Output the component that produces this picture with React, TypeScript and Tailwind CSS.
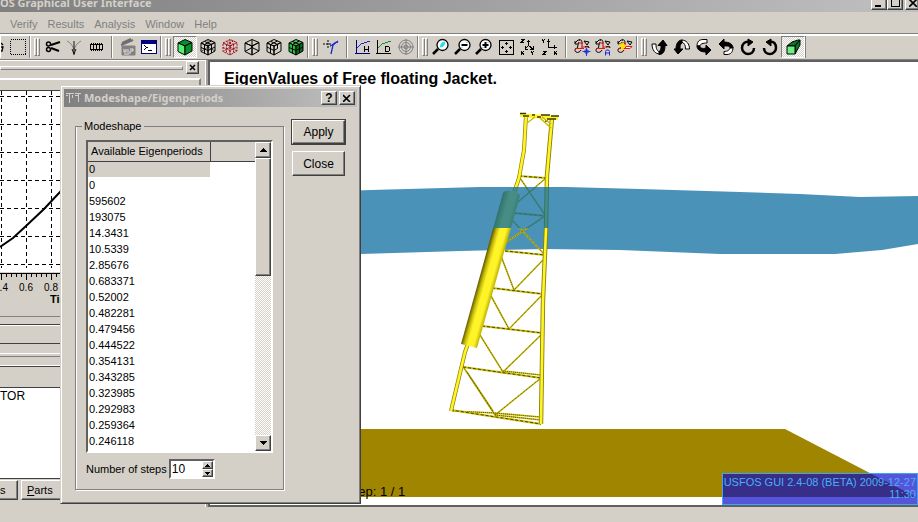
import React from "react";

type Kids = { children?: React.ReactNode };

const eigenperiods = [
  "0", "0", "595602", "193075", "14.3431", "10.5339", "2.85676", "0.683371", "0.52002",
  "0.482281", "0.479456", "0.444522", "0.354131", "0.343285", "0.323985", "0.292983",
  "0.259364", "0.246118",
];

const raised =
  "bg-[#d4d0c8] border border-t-white border-l-white border-r-[#404040] border-b-[#404040] shadow-[inset_-1px_-1px_0_#808080]";
const dither = "bg-[repeating-conic-gradient(#ffffff_0_25%,#d4d0c8_0_50%)] bg-[length:2px_2px]";

function Icon({ children, crisp = false }: Kids & { crisp?: boolean }) {
  return (
    <svg
      className="h-[18px] w-[18px] shrink-0"
      viewBox="0 0 18 18"
      fill="none"
      stroke="#000"
      shapeRendering={crisp ? "crispEdges" : "auto"}
      aria-hidden="true"
    >
      {children}
    </svg>
  );
}

function Tool({ label, on = false, children }: Kids & { label: string; on?: boolean }) {
  return (
    <button
      type="button"
      aria-label={label}
      className={`flex h-[22px] min-w-0 flex-1 items-center justify-center ${
        on ? `border border-t-[#808080] border-l-[#808080] border-r-white border-b-white ${dither}` : ""
      }`}
    >
      {children}
    </button>
  );
}

function Grip() {
  return (
    <div className="mr-[2px] ml-[3px] flex h-[18px] w-[6px] shrink-0">
      <div className="w-[3px] border border-t-white border-l-white border-r-[#808080] border-b-[#808080]" />
      <div className="w-[3px] border border-t-white border-l-white border-r-[#808080] border-b-[#808080]" />
    </div>
  );
}

function Bar({ width, children }: Kids & { width: string }) {
  return (
    <div className={`flex h-[22px] shrink-0 items-center border-r border-l border-r-[#808080] border-l-white ${width}`}>
      {children}
    </div>
  );
}

const Split = () => <div className="mx-1 h-[22px] w-[2px] shrink-0 border-l border-[#808080] bg-white" />;

function Cube({ mode }: { mode: "solid" | "mesh" | "dots" | "wire" | "hidden" | "greenmesh" }) {
  const solid = mode === "solid";
  const green = mode === "greenmesh";
  const stroke = mode === "dots" ? "#a01020" : "#000";
  return (
    <Icon>
      <g stroke={stroke} strokeWidth="1" strokeDasharray={mode === "dots" ? "2 1" : undefined} strokeLinejoin="round">
        <path d="M2 5 9 1.500 16 4.500 9 8Z" fill={solid ? "#089030" : green ? "#50c060" : "none"} />
        <path d="M2 5 9 8V17L2 13.500Z" fill={solid ? "#58f070" : green ? "#28c040" : "none"} />
        <path d="M9 8 16 4.500V13L9 17Z" fill={solid ? "#06902a" : green ? "#086820" : "none"} />
        {(mode === "mesh" || mode === "dots" || green) && (
          <path d="M5.500 6.500V15.500M2 9.500 9 12.500 16 9M12.500 6.500V15M5.500 3.500 12.500 6.500M5.500 6.500 12.500 3" />
        )}
        {mode === "mesh" && <path d="M9 1.500V9L2 13.500M9 9 16 13" strokeWidth="0.600" />}
        {mode === "dots" && <path d="M9 1.500V9L2 13.500M9 9 16 13" />}
        {mode === "wire" && <path d="M9 1.500V9.500L2 13.500M9 9.500 16 13" />}
        {mode === "hidden" && <path d="M5.500 6.500V15M2 9 9 12.500 12.500 10.500V6.500L6 3.500M5.500 6.500 12.500 3" />}
      </g>
    </Icon>
  );
}

function Lens({ sign }: { sign: "none" | "minus" | "plus" }) {
  return (
    <Icon>
      <path d="M1 16 6 11" strokeWidth="2.500" />
      <circle cx="10.500" cy="7" r="5.500" fill="#fff" strokeWidth="1.300" />
      {sign === "none" && <path d="M8.500 9c0-3 2-5 4-5 0 3-1 5-4 5Z" fill="#20e0e8" stroke="#20e0e8" />}
      {sign !== "none" && <path d={sign === "minus" ? "M7.500 7h6" : "M7.500 7h6M10.500 4v6"} strokeWidth="2" />}
      {sign !== "none" && <path d="M7.500 9.500h1M12.500 4.500h1" stroke="#20e0e8" />}
    </Icon>
  );
}

function Orbit({ kind }: { kind: "move" | "auto" | "light" }) {
  return (
    <Icon>
      <path d="M2 3v3h3M2 5l3-3h2M11 3l5 1-2 3Z" />
      <path d="M6 2c3-1 3 2 3 4M6 4c-1 3-2 5-1 7M5 10c-3 0-4 3-2 4s4 0 5-2" />
      <path d="M5 5h4v4h7M2 10.500h9M9 5v6" stroke="#e01818" strokeWidth="1.200" />
      {kind === "move" && <path d="M13.500 10v8M9.500 13.500h8M12 12h3v3h-3Z" stroke="#1828e0" strokeWidth="0.900" />}
      {kind === "auto" && <path d="M11.500 17.500v-4l1-1.500h2l1 1.500v4M11.500 15h4" stroke="#1828e0" />}
      {kind !== "light" && <path d="M12 9c2-1 4-1 4 1" />}
      {kind === "light" && (
        <>
          <path d="M7 5 8 7 11 8 8 9.500 6 12 5 9 3 7Z" fill="#ffe000" stroke="#ffe000" />
          <path d="M10 8.500h6l-2 2h-5Z" fill="#fff" stroke="#e01818" />
        </>
      )}
    </Icon>
  );
}

function Toolbar() {
  return (
    <div className="flex h-[24px] shrink-0 items-start overflow-hidden border-t border-white">
      <Bar width="w-[30px]">
        <div className="w-[6px] shrink-0 overflow-hidden">
          <svg className="h-[18px] w-[6px]" viewBox="0 0 6 18" fill="none" stroke="#000" aria-hidden="true">
            <path d="M0 5 2 7M0 9h2l-1 4H0" strokeWidth="1.300" />
          </svg>
        </div>
        <Tool label="Select area">
          <Icon crisp>
            <path d="M1.500 1.500h15v15h-15Z" strokeDasharray="1 1" />
          </Icon>
        </Tool>
      </Bar>
      <Bar width="w-[131px]">
        <Grip />
        <Tool label="Cut">
          <Icon>
            <path d="M7 7 16 4M7 10 15 13" strokeWidth="2" />
            <circle cx="4.500" cy="6" r="2" strokeWidth="1.500" />
            <circle cx="4.500" cy="11.500" r="2" strokeWidth="1.500" />
          </Icon>
        </Tool>
        <Tool label="Split member">
          <Icon>
            <path d="M2 3c4 2 6 5 7 9 1-4 3-7 7-9" stroke="#808080" />
            <path d="M9 3v14M7 11l2 5 2-5" strokeWidth="0.900" />
          </Icon>
        </Tool>
        <Tool label="Film strip">
          <Icon crisp>
            <path d="M3 6.500h13M3 11.500h13M3.500 6v6M6.500 6v6M9.500 6v6M12.500 6v6M15.500 6v6" />
            <path d="M4 5.500h11M4 12.500h11" strokeDasharray="1 1" />
          </Icon>
        </Tool>
        <Split />
        <Tool label="Record animation">
          <Icon>
            <path d="M3 8h13v9H3Z" fill="#808080" stroke="#808080" />
            <path d="M2 7 14 2M3 5 12 1" stroke="#707070" strokeWidth="2" />
            <path d="M5 11v3h2v-3M9 11v4M11 11h3v2h-3v3M5 16h5" stroke="#e8e8e8" />
          </Icon>
        </Tool>
        <Tool label="Console">
          <Icon crisp>
            <path d="M1.500 2.500h15v13h-15Z" fill="#fff" stroke="#000080" />
            <path d="M1 4h16" stroke="#000080" strokeWidth="3" />
            <path d="M4 7.500l3 2-3 2M8 12.500h4" />
          </Icon>
        </Tool>
      </Bar>
      <Bar width="w-[147px]">
        <Grip />
        <Tool label="Solid view" on><Cube mode="solid" /></Tool>
        <Tool label="Mesh view"><Cube mode="mesh" /></Tool>
        <Tool label="Dotted view"><Cube mode="dots" /></Tool>
        <Tool label="Wireframe view"><Cube mode="wire" /></Tool>
        <Tool label="Hidden line view"><Cube mode="hidden" /></Tool>
        <Tool label="Shaded mesh view"><Cube mode="greenmesh" /></Tool>
      </Bar>
      <Bar width="w-[110px]">
        <Grip />
        <Tool label="Local axes">
          <Icon>
            <path d="M1 6h8M6 2v8" strokeDasharray="2 1" />
            <path d="M9 16 11 7 16 3M8 8c3 0 3-4 8-4" stroke="#1828d0" strokeWidth="1.300" />
          </Icon>
        </Tool>
        <Split />
        <Tool label="History plot">
          <Icon crisp>
            <path d="M2.500 2v14M1 15.500h15" stroke="#000080" />
            <path d="M3 10 7 6 16 3" stroke="#1828d0" />
            <path d="M10.500 8v6M14.500 8v6M10 11.500h5" />
          </Icon>
        </Tool>
        <Tool label="Dynamic plot">
          <Icon crisp>
            <path d="M2.500 2v14M1 15.500h15" />
            <path d="M3 10 7 6 16 3" stroke="#109020" />
            <path d="M10.500 8.500v5h3l1-1V9.500l-1-1Z" />
          </Icon>
        </Tool>
        <Tool label="Target">
          <Icon>
            <g stroke="#808080">
              <circle cx="9" cy="9" r="7" />
              <circle cx="9" cy="9" r="4.500" />
              <circle cx="9" cy="9" r="2" />
              <path d="M1 9h16M9 1v16" />
            </g>
          </Icon>
        </Tool>
      </Bar>
      <Bar width="w-[219px]">
        <Grip />
        <Tool label="Zoom window"><Lens sign="none" /></Tool>
        <Tool label="Zoom out"><Lens sign="minus" /></Tool>
        <Tool label="Zoom in"><Lens sign="plus" /></Tool>
        <Tool label="Fit to window">
          <Icon crisp>
            <path d="M2.500 2.500h14v14h-14ZM9.500 4v3M9.500 12v3M4 9.500h3M12 9.500h3M8 5.500h3M8 13.500h3M5.500 8v3M13.500 8v3" />
          </Icon>
        </Tool>
        <Tool label="Isometric view">
          <Icon crisp>
            <path d="M2 1.500h3L2 4.500h3M9.500 2v6M8 3.500h3M9 8 6 11M10 8l4 3M14 8v3h-3M6 8v3h3M2 13l3 4M5 13l-3 4M12 13l1 2 2-2M13.500 15v2" />
          </Icon>
        </Tool>
        <Tool label="Plan view">
          <Icon crisp>
            <path d="M1 1l1 2 2-2M2.500 3v2M7.500 1v8h8M6 3.500h3M13.500 7v4M2 13.500h3l-3 3h3M13 13l3 4M16 13l-3 4" />
          </Icon>
        </Tool>
        <Split />
        <Tool label="Rotate model"><Orbit kind="move" /></Tool>
        <Tool label="Auto rotate"><Orbit kind="auto" /></Tool>
        <Tool label="Rotate light"><Orbit kind="light" /></Tool>
      </Bar>
      <Bar width="w-[169px]">
        <Grip />
        <Tool label="Turn up">
          <Icon>
            <path d="M1 6h4c0 5 1 7 4 8v2C4 16 1 12 1 6Z" fill="#fff" />
            <path d="M8 16.500v-3c2-1 2-3 2-6H7l5-5.500 4 5.500h-2c0 6-2 9-6 9Z" fill="#000" />
          </Icon>
        </Tool>
        <Tool label="Turn down">
          <Icon>
            <path d="M16.500 11h-4c0-4-1-6-4-7V2c5 0 8 4 8 9Z" fill="#fff" />
            <path d="M9 2v3c-2 1-2 3-2 6h3l-5 5-4-5h2c0-5 2-9 6-9Z" fill="#000" />
          </Icon>
        </Tool>
        <Tool label="Turn right">
          <Icon>
            <path d="M12 1.500H8C4 1.500 2 4 2 8h3c0-2 3-3 7-3Z" fill="#fff" />
            <path d="M2 8c0 4 4 6 9 6v3l5-5-5-5v3C7 11 5 10 5 8Z" fill="#000" />
          </Icon>
        </Tool>
        <Tool label="Turn left">
          <Icon>
            <path d="M7 16.500h3c4 0 6-3 6-7h-3c0 2-2 4-6 4Z" fill="#fff" />
            <path d="M16 10c0-4-4-6-9-6V1L2 6l5 5V8c4 0 6 0 6 2Z" fill="#000" />
          </Icon>
        </Tool>
        <Tool label="Rotate clockwise">
          <Icon>
            <path d="M10 4C6 3 3 6 3 10c0 3 3 6 6 6s6-2 6-6" strokeWidth="2.500" />
            <path d="M9 1l5 3-5 4Z" fill="#000" />
          </Icon>
        </Tool>
        <Tool label="Rotate counterclockwise">
          <Icon>
            <path d="M9 4c4-1 6 2 6 6 0 3-3 6-6 6s-6-2-6-6" strokeWidth="2.500" />
            <path d="M10 1 5 4l5 4Z" fill="#000" />
          </Icon>
        </Tool>
        <Tool label="Perspective" on>
          <Icon>
            <path d="M3 8h8l5-6h-2L8 4Z" fill="#087828" />
            <path d="M11 8 16 2v5l-5 9Z" fill="#087828" />
            <path d="M3 8h8v8H3Z" fill="#70f080" />
          </Icon>
        </Tool>
      </Bar>
    </div>
  );
}

function Plot() {
  const rows = [5, 33, 61, 89, 117, 145, 173];
  const cols = [1, 26, 51, 76, 101, 126, 151, 176];
  const ticks = Array.from({ length: 40 }, (_, i) => 1 + i * 5);
  return (
    <svg className="h-[225px] w-full" aria-label="Response over time" role="img">
      <g shapeRendering="crispEdges" stroke="#000">
        <rect width="207" height="181" fill="#fff" stroke="none" />
        {rows.map((y) => (
          <path key={y} d={`M0 ${y + 0.5}H200`} strokeDasharray="4 3" />
        ))}
        {cols.map((x) => (
          <path key={x} d={`M${x + 0.5} 0V177`} strokeDasharray="4 3" />
        ))}
        <path d="M0 182.500H200" />
        {ticks.map((x, i) => (
          <path key={x} d={`M${x + 0.5} 183v${i % 5 === 0 ? 6 : 3}`} />
        ))}
      </g>
      <path d="M0 156 13 147 26 135 44 118 60 101 90 70" fill="none" stroke="#000" strokeWidth="2" />
      <g className="font-['Liberation_Sans'] text-[10px]" textAnchor="middle">
        <text x="1" y="200">0.4</text>
        <text x="26" y="200">0.6</text>
        <text x="51" y="200">0.8</text>
      </g>
      <text x="50" y="212" className="font-['Liberation_Sans'] text-[11px] font-bold">Time</text>
    </svg>
  );
}

function Dock() {
  return (
    <aside className="flex w-[205px] shrink-0 flex-col overflow-hidden border-t border-white">
      <div className="flex h-[13px] items-center pr-[6px]">
        <div className="h-[4px] flex-1 border border-t-white border-l-white border-r-[#808080] border-b-[#808080]" />
        <button
          type="button"
          aria-label="Close panel"
          className={`ml-[3px] flex h-[13px] w-[13px] items-center justify-center ${raised}`}
        >
          <svg className="h-[7px] w-[7px]" viewBox="0 0 7 7" stroke="#000" strokeWidth="1.500" aria-hidden="true">
            <path d="M1 1 6 6M6 1 1 6" />
          </svg>
        </button>
      </div>
      <div className="mt-[4px] mr-[4px] h-[13px] border-t-2 border-r-2 border-b border-t-white border-r-[#808080] border-b-[#404040]" />
      <Plot />
      <div className="h-[9px] border-t border-b border-t-[#808080] border-b-[#404040]" />
      <div className="h-[18px] border-t border-white" />
      <div className="h-[11px] border-t border-b border-t-[#404040] border-b-white" />
      <div className="mt-[2px] h-[10px] border-t border-b border-t-[#808080] border-b-white" />
      <div className="h-[21px] border-t border-[#404040]" />
      <div className="h-[92px] border-t border-b border-t-[#404040] border-b-[#404040] bg-white pt-px text-[12px] leading-[14px]">
        TOR
      </div>
      <div className="flex gap-[3px] pt-px text-[11px] leading-[14px]">
        <button type="button" className={`h-[20px] w-[18px] overflow-hidden border-l-0 text-left ${raised}`}>
          <span className="-ml-[6px]">ps</span>
        </button>
        <button type="button" className={`h-[20px] w-[52px] pl-[5px] text-left ${raised}`}>
          <u>P</u>arts
        </button>
      </div>
    </aside>
  );
}

type Tones = { dark: string; mid: string; light: string; line: string };

const dry: Tones = { dark: "#4c4600", mid: "#c8bc08", light: "#fff428", line: "#8c8000" };
const wet: Tones = { dark: "#2f716c", mid: "#3d8279", light: "#478d83", line: "#2f7468" };

function Jacket({ id, tones }: { id: string; tones: Tones }) {
  const leftLeg = "M526 115 524 150 519 178 510 205 480 310 465 352 451 411";
  const rightLeg = "M552 118 547 175 546 230 543 300 541 424";
  const braces =
    "M519 176 546 178M514 213 546 216M505 251 545 255M492 288 543 294M482 326 542 333M463 367 541 378M451 410 541 424";
  const diagonals =
    "M520 178 545 215M546 178 518 202M545 216 505 243M513 221 544 254M501 256 514 290 543 260M491 296 509 329 543 294M480 335 503 372 542 334M464 368 495 415 541 378M467 372 493 411M453 411 495 413 540 417M503 371 541 375M495 415 541 420";
  return (
    <g fill="none">
      <defs>
        <linearGradient id={id} gradientUnits="userSpaceOnUse" x1="481" y1="270" x2="497" y2="274.500">
          <stop offset="0" stopColor={tones.dark} />
          <stop offset="0.250" stopColor={tones.mid} />
          <stop offset="0.450" stopColor={tones.light} />
          <stop offset="0.800" stopColor={tones.light} />
          <stop offset="1" stopColor={tones.mid} />
        </linearGradient>
      </defs>
      <path d={diagonals} stroke={tones.mid} strokeWidth="1.600" />
      <path d={diagonals} stroke={tones.dark} strokeWidth="0.800" strokeDasharray="1 1" />
      <path d={braces} stroke={tones.mid} strokeWidth="2" />
      <path d={braces} stroke={tones.dark} strokeWidth="1" strokeDasharray="3 2" />
      <path d={leftLeg} stroke={tones.line} strokeWidth="4" />
      <path d={leftLeg} stroke={tones.light} strokeWidth="2.600" />
      <path d={rightLeg} stroke={tones.line} strokeWidth="4.400" />
      <path d={rightLeg} stroke={tones.light} strokeWidth="2.600" />
      <path d="M520 115 558 118" stroke={tones.light} strokeWidth="4" />
      <path d="M520 113.500h6M523 116h6M532 115h3M537 117h4M541 115h9M547 119h9M551 116h8M545 121h3" stroke="#3c3800" strokeWidth="1.500" />
      <path d="M527 123 535 117M540 118 551 128M542 117 551 124" stroke={tones.mid} strokeWidth="1.500" />
      <path d="M503 193C505 189 519 191 520 196L477 348 461 344Z" fill={`url(#${id})`} />
    </g>
  );
}

function Viewport() {
  return (
    <main className="relative min-w-0 flex-1 overflow-hidden border-t-2 border-b-2 border-l-2 border-[#606060] bg-white">
      <svg
        className="absolute inset-0 h-full w-full"
        viewBox="210 62 708 443"
        preserveAspectRatio="xMinYMin slice"
        role="img"
        aria-label="Jacket structure floating above the seabed"
      >
        <defs>
          <clipPath id="above"><path d="M210 62H918V187H210ZM210 228H918V505H210Z" /></clipPath>
          <clipPath id="below"><path d="M210 187H918V228H210Z" /></clipPath>
        </defs>
        <path d="M210 196 371 190 480 187 565 187 640 189 740 192 800 194 860 197 918 196V244L882 250 835 254 720 254 620 250 545 249 460 251 361 254 210 256Z" fill="#4a92b7" />
        <path d="M210 429H785L918 498H210Z" fill="#a08600" />
        <path d="M210 497H918V505H210Z" fill="#fff" />
        <g clipPath="url(#above)"><Jacket id="dryTube" tones={dry} /></g>
        <g clipPath="url(#below)"><Jacket id="wetTube" tones={wet} /></g>
      </svg>
      <h1 className="absolute top-[7px] left-[14px] text-[16px] leading-[20px] font-bold whitespace-nowrap">
        EigenValues of Free floating Jacket.
      </h1>
      <p className="absolute bottom-[5px] left-[136px] text-[13px] leading-[16px] whitespace-nowrap">Step: 1 / 1</p>
      <p className="absolute right-0 bottom-0 border border-[#3aa8f8] bg-[#0505c8]/68 px-px pt-[2px] pb-[4px] text-right text-[11px] leading-[12px] whitespace-nowrap text-[#48b0f8]">
        USFOS GUI 2.4-08 (BETA) 2009-12-27
        <br />
        11:30
      </p>
    </main>
  );
}

function Arrow({ up = false, small = false }: { up?: boolean; small?: boolean }) {
  return (
    <svg className={small ? "h-[3px] w-[5px]" : "h-[4px] w-[7px]"} viewBox="0 0 7 4" shapeRendering="crispEdges" aria-hidden="true">
      <path d={up ? "M0 4 3.500 0 7 4Z" : "M0 0 3.500 4 7 0Z"} />
    </svg>
  );
}

function ModeshapeDialog() {
  return (
    <section
      role="dialog"
      aria-label="Modeshape/Eigenperiods"
      className="absolute top-[85px] left-[60px] w-[301px] border border-t-[#d4d0c8] border-r-[#404040] border-b-[#404040] border-l-[#d4d0c8] bg-[#d4d0c8] p-[3px] text-[11px] leading-[14px] shadow-[inset_1px_1px_0_#fff,inset_-1px_-1px_0_#808080]"
    >
      <header className="flex h-[18px] items-center gap-[2px] bg-linear-to-r from-[#808080] to-[#c0c0c0] pr-[2px] pl-[2px]">
        <svg className="h-[12px] w-[16px]" viewBox="0 0 16 12" fill="none" stroke="#d4d0c8" shapeRendering="crispEdges" aria-hidden="true">
          <path d="M0 1.500h8M9 1.500h6M3.500 1v10M0 3.500h2M9 3.500h4M12.500 1v9M6.500 3v3" />
        </svg>
        <h2 className="flex-1 font-['Noto_Sans'] text-[11px] font-bold text-[#d4d0c8]">Modeshape/Eigenperiods</h2>
        <button type="button" aria-label="Help" className={`flex h-[14px] w-[16px] items-center justify-center text-[12px] leading-[12px] font-bold ${raised}`}>
          ?
        </button>
        <button type="button" aria-label="Close dialog" className={`flex h-[14px] w-[16px] items-center justify-center ${raised}`}>
          <svg className="h-[8px] w-[8px]" viewBox="0 0 8 8" stroke="#000" strokeWidth="1.600" aria-hidden="true">
            <path d="M0 1 7 8M7 1 0 8" />
          </svg>
        </button>
      </header>
      <div className="flex items-start gap-[7px] pt-[12px] pb-[10px] pl-[11px]">
        <fieldset className="w-[209px] border border-[#808080] px-[10px] pt-[7px] pb-[10px] shadow-[1px_1px_0_#fff,inset_1px_0_0_#fff]">
          <legend className="-ml-[4px] px-[2px]">Modeshape</legend>
          <div className="flex h-[313px] border-2 border-t-[#606060] border-r-white border-b-white border-l-[#606060] bg-white">
            <table className="flex-1 table-fixed border-collapse self-start">
              <thead>
                <tr className="h-[19px] bg-[#d4d0c8]">
                  <th scope="col" className="w-[122px] border-r border-b border-[#404040] pl-[3px] text-left font-normal whitespace-nowrap">
                    Available Eigenperiods
                  </th>
                  <th scope="col" className="border-b border-l border-b-[#404040] border-l-white" />
                </tr>
              </thead>
              <tbody>
                {eigenperiods.map((value, i) => (
                  <tr key={i} className="h-[16px]">
                    <td className={`py-0 pr-0 pl-px ${i === 0 ? "bg-[#d4d0c8]" : ""}`}>{value}</td>
                    <td />
                  </tr>
                ))}
              </tbody>
            </table>
            <div className={`flex w-[16px] flex-col ${dither}`}>
              <button type="button" aria-label="Scroll up" className={`flex h-[16px] items-center justify-center ${raised}`}>
                <Arrow up />
              </button>
              <div className={`h-[118px] ${raised}`} />
              <div className="flex-1" />
              <button type="button" aria-label="Scroll down" className={`flex h-[16px] items-center justify-center ${raised}`}>
                <Arrow />
              </button>
            </div>
          </div>
          <div className="mt-[6px] flex items-center gap-[2px]">
            <label htmlFor="steps" className="whitespace-nowrap">Number of steps</label>
            <div className="flex h-[20px] w-[46px] border-2 border-t-[#606060] border-r-white border-b-white border-l-[#606060] bg-white">
              <input id="steps" type="text" inputMode="numeric" defaultValue="10" className="w-0 min-w-0 flex-1 pl-px text-[12px] outline-none" />
              <div className="flex w-[11px] flex-col">
                <button type="button" aria-label="More steps" className={`flex flex-1 items-center justify-center ${raised}`}>
                  <Arrow up small />
                </button>
                <button type="button" aria-label="Fewer steps" className={`flex flex-1 items-center justify-center ${raised}`}>
                  <Arrow small />
                </button>
              </div>
            </div>
          </div>
        </fieldset>
        <div className="flex flex-col items-center gap-[6px] text-[12px]">
          <div className="border border-[#404040]">
            <button type="button" className={`block h-[24px] w-[53px] ${raised}`}>Apply</button>
          </div>
          <button type="button" className={`h-[25px] w-[53px] ${raised}`}>Close</button>
        </div>
      </div>
    </section>
  );
}

export default function App() {
  return (
    <div className="relative flex h-screen flex-col overflow-hidden bg-[#d4d0c8] font-['Liberation_Sans',Arial,sans-serif] text-black">
      <header className="flex h-[12px] shrink-0 items-end justify-between overflow-hidden bg-linear-to-r from-[#808080] to-[#c0c0c0]">
        <span className="font-['Noto_Sans'] text-[11px] leading-[18px] font-bold whitespace-nowrap text-[#d4d0c8]">
          OS Graphical User Interface
        </span>
        <div className="flex pb-[2px]">
          <button type="button" aria-label="Minimize" className={`flex h-[14px] w-[16px] items-end pb-[2px] pl-[3px] ${raised}`}>
            <span className="h-[2px] w-[6px] bg-black" />
          </button>
          <button type="button" aria-label="Maximize" className={`mr-[2px] flex h-[14px] w-[16px] items-end pb-[2px] pl-[3px] ${raised}`}>
            <span className="h-[9px] w-[9px] border border-t-2 border-black" />
          </button>
          <button type="button" aria-label="Close" className={`flex h-[14px] w-[13px] items-end overflow-hidden border-r-0 pb-[2px] pl-[3px] ${raised}`}>
            <svg className="h-[8px] w-[8px]" viewBox="0 0 8 8" stroke="#000" strokeWidth="1.600" aria-hidden="true">
              <path d="M0 0 8 8M8 0 0 8" />
            </svg>
          </button>
        </div>
      </header>
      <nav className="flex h-[21px] shrink-0 items-center gap-[10px] pt-[3px] pl-[10px] text-[11px] text-[#808080]">
        <button type="button">Verify</button>
        <button type="button">Results</button>
        <button type="button">Analysis</button>
        <button type="button">Window</button>
        <button type="button">Help</button>
      </nav>
      <div className="h-[2px] shrink-0 border-t border-[#808080] bg-white" />
      <Toolbar />
      <div className="flex min-h-0 flex-1 border-t border-[#808080]">
        <Dock />
        <div className="w-[3px] shrink-0 border-l border-white bg-[#a0a0a0]" />
        <Viewport />
      </div>
      <footer className="h-[15px] shrink-0" />
      <ModeshapeDialog />
    </div>
  );
}
